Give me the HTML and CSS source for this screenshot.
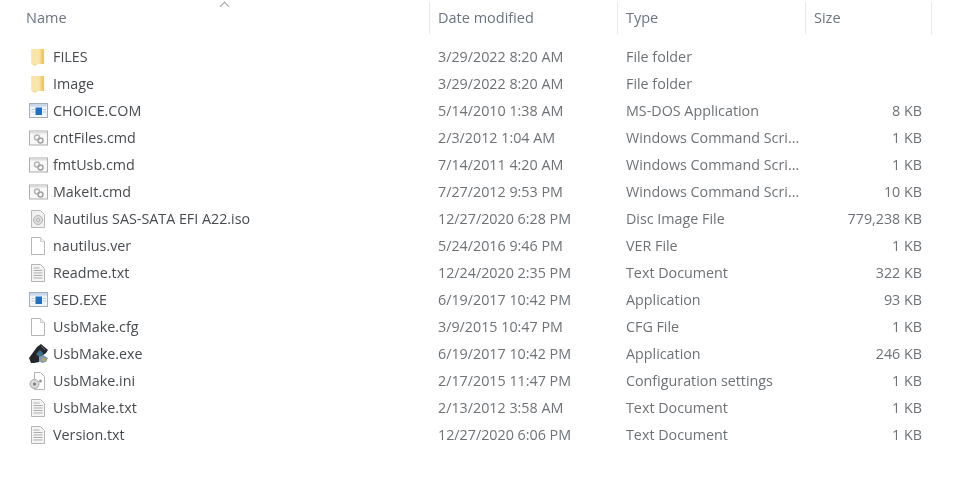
FILE: index.html
```html
<!DOCTYPE html>
<html lang="en">
<head>
    <meta charset="UTF-8">
    <title>Explorer - Details</title>
    <link rel="stylesheet" href="styles.css">
</head>
<body>
    <svg class="defs" width="0" height="0">
        <symbol id="i-folder" viewBox="0 0 20 20">
            <path d="M2.500 2h11.500v15h-6l-1.500 2-4-2z" fill="#f7d987"/>
            <path d="M2.500 2h8v15h-8z" fill="#fae5a8"/>
            <path d="M12.500 2H15v15h-2.500z" fill="#f0c860"/>
        </symbol>
        <symbol id="i-app" viewBox="0 0 20 20">
            <rect x="0.500" y="2.500" width="18" height="14" fill="#f0f5fb" stroke="#a3adb8"/>
            <rect x="1" y="3" width="17" height="2.500" fill="#c6d8ea"/>
            <rect x="6.500" y="6.500" width="6.500" height="7.500" fill="#1f6fc4"/>
            <path d="M2.500 8.500h3M2.500 11h3M14 8.500h3M14 11h3" stroke="#b6cce2"/>
        </symbol>
        <symbol id="i-cmd" viewBox="0 0 20 20">
            <rect x="0.500" y="3" width="18" height="14" fill="#f8f8f8" stroke="#adadad"/>
            <rect x="1" y="3.500" width="17" height="2" fill="#dedede"/>
            <circle cx="8" cy="9.500" r="2.500" fill="none" stroke="#b5b5b5" stroke-width="1.400"/>
            <circle cx="11.500" cy="12.500" r="2.500" fill="none" stroke="#a0a0a0" stroke-width="1.400"/>
        </symbol>
        <symbol id="i-disc" viewBox="0 0 20 20">
            <path d="M2.500 1.500h9l4 4v13h-13z" fill="#f1f1f1" stroke="#b8b8b8"/>
            <circle cx="9" cy="11" r="4.500" fill="#dcdcdc" stroke="#b5b5b5"/>
            <circle cx="9" cy="11" r="1.500" fill="#fafafa" stroke="#aaa"/>
        </symbol>
        <symbol id="i-blank" viewBox="0 0 20 20">
            <path d="M2.500 1.500h9l4 4v13h-13z" fill="#fff" stroke="#b5b5b5"/>
            <path d="M11.500 1.500v4h4" fill="#f2f2f2" stroke="#cdcdcd"/>
        </symbol>
        <symbol id="i-text" viewBox="0 0 20 20">
            <path d="M2.500 1.500h9l4 4v13h-13z" fill="#f4f4f4" stroke="#b5b5b5"/>
            <path d="M4.500 5h6M4.500 7.500h9M4.500 10h9M4.500 12.500h9M4.500 15h9" stroke="#adadad"/>
        </symbol>
        <symbol id="i-usb" viewBox="0 0 20 20">
            <path d="M0 14L8 3l4-3 7 6-2 3-4 3-3 6-5 1-3 0z" fill="#23262b"/>
            <path d="M7 10l4-4 3.500 3.500-4 4z" fill="#3f6f8f"/>
            <path d="M10 13l4-2 5 3-2 4-4 1-3-2z" fill="#7c9fb6"/>
            <path d="M13.500 14.500h2.500v2.500h-2.500z" fill="#d7a53c"/>
            <path d="M12 2l4 4" stroke="#6b7075"/>
        </symbol>
        <symbol id="i-ini" viewBox="0 0 20 20">
            <path d="M5.500 1.500h6l4 4v13h-10z" fill="#fff" stroke="#b5b5b5"/>
            <circle cx="5.500" cy="13" r="4.500" fill="#dadada" stroke="#a8a8a8"/>
            <circle cx="5.500" cy="13" r="1.500" fill="#777"/>
            <circle cx="11.500" cy="10" r="1.500" fill="#999"/>
        </symbol>
    </svg>

    <div class="listing">
        <div class="head-row">
            <div class="head-cell name-head">Name<span class="sort-mark"></span></div>
            <div class="head-cell">Date modified</div>
            <div class="head-cell">Type</div>
            <div class="head-cell">Size</div>
        </div>
        <div class="rows">
            <div class="row"><div class="name"><svg class="icon"><use href="#i-folder"/></svg>FILES</div><div>3/29/2022 8:20 AM</div><div>File folder</div><div class="size"></div></div>
            <div class="row"><div class="name"><svg class="icon"><use href="#i-folder"/></svg>Image</div><div>3/29/2022 8:20 AM</div><div>File folder</div><div class="size"></div></div>
            <div class="row"><div class="name"><svg class="icon"><use href="#i-app"/></svg>CHOICE.COM</div><div>5/14/2010 1:38 AM</div><div>MS-DOS Application</div><div class="size">8 KB</div></div>
            <div class="row"><div class="name"><svg class="icon"><use href="#i-cmd"/></svg>cntFiles.cmd</div><div>2/3/2012 1:04 AM</div><div>Windows Command Scri...</div><div class="size">1 KB</div></div>
            <div class="row"><div class="name"><svg class="icon"><use href="#i-cmd"/></svg>fmtUsb.cmd</div><div>7/14/2011 4:20 AM</div><div>Windows Command Scri...</div><div class="size">1 KB</div></div>
            <div class="row"><div class="name"><svg class="icon"><use href="#i-cmd"/></svg>MakeIt.cmd</div><div>7/27/2012 9:53 PM</div><div>Windows Command Scri...</div><div class="size">10 KB</div></div>
            <div class="row"><div class="name"><svg class="icon"><use href="#i-disc"/></svg>Nautilus SAS-SATA EFI A22.iso</div><div>12/27/2020 6:28 PM</div><div>Disc Image File</div><div class="size">779,238 KB</div></div>
            <div class="row"><div class="name"><svg class="icon"><use href="#i-blank"/></svg>nautilus.ver</div><div>5/24/2016 9:46 PM</div><div>VER File</div><div class="size">1 KB</div></div>
            <div class="row"><div class="name"><svg class="icon"><use href="#i-text"/></svg>Readme.txt</div><div>12/24/2020 2:35 PM</div><div>Text Document</div><div class="size">322 KB</div></div>
            <div class="row"><div class="name"><svg class="icon"><use href="#i-app"/></svg>SED.EXE</div><div>6/19/2017 10:42 PM</div><div>Application</div><div class="size">93 KB</div></div>
            <div class="row"><div class="name"><svg class="icon"><use href="#i-blank"/></svg>UsbMake.cfg</div><div>3/9/2015 10:47 PM</div><div>CFG File</div><div class="size">1 KB</div></div>
            <div class="row"><div class="name"><svg class="icon"><use href="#i-usb"/></svg>UsbMake.exe</div><div>6/19/2017 10:42 PM</div><div>Application</div><div class="size">246 KB</div></div>
            <div class="row"><div class="name"><svg class="icon"><use href="#i-ini"/></svg>UsbMake.ini</div><div>2/17/2015 11:47 PM</div><div>Configuration settings</div><div class="size">1 KB</div></div>
            <div class="row"><div class="name"><svg class="icon"><use href="#i-text"/></svg>UsbMake.txt</div><div>2/13/2012 3:58 AM</div><div>Text Document</div><div class="size">1 KB</div></div>
            <div class="row"><div class="name"><svg class="icon"><use href="#i-text"/></svg>Version.txt</div><div>12/27/2020 6:06 PM</div><div>Text Document</div><div class="size">1 KB</div></div>
        </div>
    </div>
</body>
</html>
```
FILE: styles.css
```css
body {
    margin: 0;
    background: #fff;
    font-family: "Open Sans", sans-serif;
    font-size: 14.3px;
    color: #4a4a4a;
    overflow: hidden;
}

.defs {
    position: absolute;
}

/* the source is a soft video frame, so everything is slightly blurred */
.listing {
    width: 933px;
    padding-top: 2px;
    filter: blur(0.55px);
}

.head-row,
.row {
    display: grid;
    grid-template-columns: 430px 188px 188px 126px;
}

.head-row {
    height: 32px;
    padding-bottom: 2px;
    color: #6d7480;
    font-size: 14.5px;
}

.head-cell {
    display: flex;
    align-items: center;
    padding-left: 8px;
    padding-bottom: 2px;
    border-right: 1px solid #e6e8ea;
}

.name-head {
    position: relative;
    padding-left: 26px;
}

.sort-mark {
    position: absolute;
    top: 1px;
    left: 221px;
    width: 6px;
    height: 6px;
    border-top: 1px solid #9aa0a6;
    border-left: 1px solid #9aa0a6;
    transform: rotate(45deg);
}

.rows {
    padding-top: 7px;
}

.row {
    height: 27px;
    align-items: center;
    color: #6e7276;
}

.row > div {
    padding-left: 8px;
    white-space: nowrap;
}

.row > .name {
    display: flex;
    align-items: center;
    gap: 4px;
    padding-left: 29px;
    color: #474b4f;
}

.row > .size {
    padding-right: 10px;
    text-align: right;
}

.icon {
    width: 20px;
    height: 20px;
    flex: none;
}
```
